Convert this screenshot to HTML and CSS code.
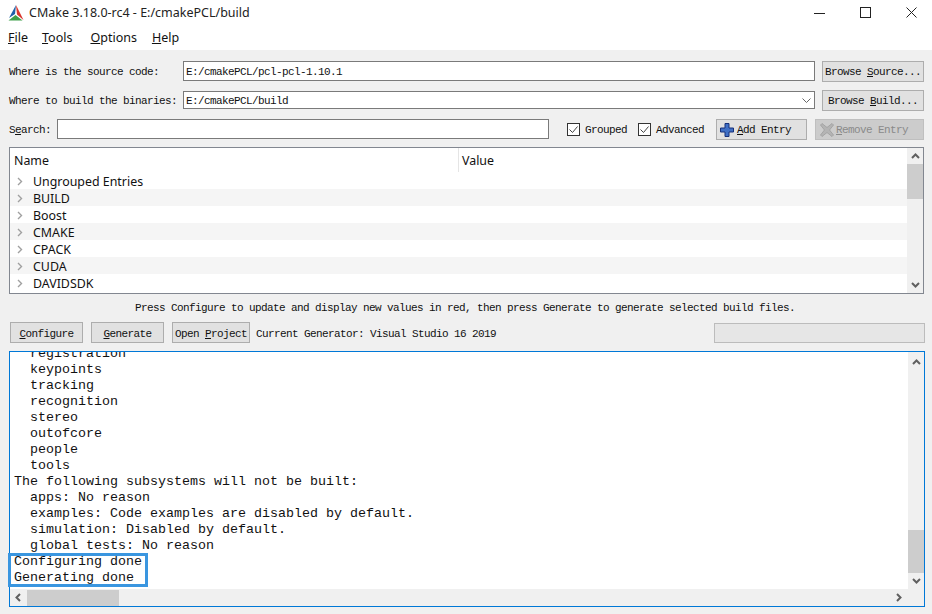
FILE: index.html
```html
<!DOCTYPE html>
<html lang="en">
<head>
<meta charset="utf-8">
<title>CMake</title>
<link rel="stylesheet" href="styles.css">
</head>
<body>
<div class="window">
  <header class="titlebar">
    <svg class="logo" viewBox="0 0 16 16"><polygon points="8,0 1,13 7,9" fill="#1f5fa8"/><polygon points="8,0 15.5,15 9,9.5" fill="#d9352c"/><polygon points="0.5,15.5 7.5,10 14.5,15.5" fill="#3f9f4a"/></svg>
    <span class="title">CMake 3.18.0-rc4 - E:/cmakePCL/build</span>
    <div class="winctl">
      <svg viewBox="0 0 11 11"><path d="M0 6.5H11" stroke="#222" fill="none"/></svg>
      <svg viewBox="0 0 11 11"><rect x="0.5" y="0.5" width="10" height="10" stroke="#222" fill="none"/></svg>
      <svg viewBox="0 0 11 11"><path d="M0.5 0.5L10.5 10.5M10.5 0.5L0.5 10.5" stroke="#222" fill="none"/></svg>
    </div>
  </header>
  <nav class="menubar">
    <span class="menu-file"><u>F</u>ile</span><span class="menu-tools"><u>T</u>ools</span><span class="menu-options"><u>O</u>ptions</span><span><u>H</u>elp</span>
  </nav>
  <main class="content">
    <div class="row row-source">
      <label class="mono label">Where is the source code:</label>
      <div class="field mono grow">E:/cmakePCL/pcl-pcl-1.10.1</div>
      <button class="btn mono btn-browse"><span>Browse <u>S</u>ource...</span></button>
    </div>
    <div class="row row-next">
      <label class="mono label">Where to build the binaries:</label>
      <div class="field combo mono grow">E:/cmakePCL/build
        <svg class="combo-arrow" viewBox="0 0 9 5"><path d="M0.5 0.5L4.5 4.5L8.5 0.5" fill="none" stroke="#666"/></svg>
      </div>
      <button class="btn mono btn-browse"><span>Browse <u>B</u>uild...</span></button>
    </div>
    <div class="row row-next">
      <label class="mono label-search">S<u>e</u>arch:</label>
      <div class="field search"></div>
      <label class="mono check check-first"><span class="box"><svg viewBox="0 0 11 11"><path d="M1.5 5.5L4.5 8.5L9.5 2.5" fill="none" stroke="#444"/></svg></span>Grouped</label>
      <label class="mono check check-second"><span class="box"><svg viewBox="0 0 11 11"><path d="M1.5 5.5L4.5 8.5L9.5 2.5" fill="none" stroke="#444"/></svg></span>Advanced</label>
      <button class="btn mono btn-add"><svg class="entry-icon" viewBox="0 0 14 14"><path d="M5 0.5H9V5H13.5V9H9V13.5H5V9H0.5V5H5Z" fill="#3f6fc4" stroke="#16307a"/></svg><span><u>A</u>dd Entry</span></button>
      <button class="btn mono btn-remove"><svg class="entry-icon" viewBox="0 0 14 14"><path d="M2 0.5L7 4.5L12 0.5L13.5 2L9.5 7L13.5 12L12 13.5L7 9.5L2 13.5L0.5 12L4.5 7L0.5 2Z" fill="#b4b4b4" stroke="#a4a4a4"/></svg><span><u>R</u>emove Entry</span></button>
    </div>
    <section class="tree">
      <div class="tree-main">
        <div class="tree-head"><div class="col-name">Name</div><div class="col-value">Value</div></div>
        <div class="tree-row"><svg class="exp" viewBox="0 0 6 9"><path d="M1 1L4.5 4.5L1 8" fill="none" stroke="#a0a0a0" stroke-width="1.4"/></svg>Ungrouped Entries</div>
        <div class="tree-row alt"><svg class="exp" viewBox="0 0 6 9"><path d="M1 1L4.5 4.5L1 8" fill="none" stroke="#a0a0a0" stroke-width="1.4"/></svg>BUILD</div>
        <div class="tree-row"><svg class="exp" viewBox="0 0 6 9"><path d="M1 1L4.5 4.5L1 8" fill="none" stroke="#a0a0a0" stroke-width="1.4"/></svg>Boost</div>
        <div class="tree-row alt"><svg class="exp" viewBox="0 0 6 9"><path d="M1 1L4.5 4.5L1 8" fill="none" stroke="#a0a0a0" stroke-width="1.4"/></svg>CMAKE</div>
        <div class="tree-row"><svg class="exp" viewBox="0 0 6 9"><path d="M1 1L4.5 4.5L1 8" fill="none" stroke="#a0a0a0" stroke-width="1.4"/></svg>CPACK</div>
        <div class="tree-row alt"><svg class="exp" viewBox="0 0 6 9"><path d="M1 1L4.5 4.5L1 8" fill="none" stroke="#a0a0a0" stroke-width="1.4"/></svg>CUDA</div>
        <div class="tree-row"><svg class="exp" viewBox="0 0 6 9"><path d="M1 1L4.5 4.5L1 8" fill="none" stroke="#a0a0a0" stroke-width="1.4"/></svg>DAVIDSDK</div>
      </div>
      <div class="vbar">
        <svg class="arrow" viewBox="0 0 9 6"><path d="M1 5L4.5 1.5L8 5" fill="none" stroke="#606060" stroke-width="2"/></svg>
        <div class="thumb thumb-tree"></div>
        <div class="spacer"></div>
        <svg class="arrow" viewBox="0 0 9 6"><path d="M1 1L4.5 4.5L8 1" fill="none" stroke="#606060" stroke-width="2"/></svg>
      </div>
    </section>
    <p class="info mono">Press Configure to update and display new values in red, then press Generate to generate selected build files.</p>
    <div class="row actions">
      <button class="btn mono btn-action"><span><u>C</u>onfigure</span></button>
      <button class="btn mono btn-action"><span><u>G</u>enerate</span></button>
      <button class="btn mono btn-open"><span>Open <u>P</u>roject</span></button>
      <span class="mono generator">Current Generator: Visual Studio 16 2019</span>
      <div class="progress"></div>
    </div>
    <section class="log">
      <div class="log-top">
        <div class="log-text">
<pre class="log-lines">  registration
  keypoints
  tracking
  recognition
  stereo
  outofcore
  people
  tools
The following subsystems will not be built:
  apps: No reason
  examples: Code examples are disabled by default.
  simulation: Disabled by default.
  global tests: No reason
Configuring done
Generating done</pre>
        </div>
        <div class="vbar vbar-log">
          <svg class="arrow" viewBox="0 0 9 6"><path d="M1 5L4.5 1.5L8 5" fill="none" stroke="#606060" stroke-width="2"/></svg>
          <div class="spacer"></div>
          <div class="thumb thumb-log"></div>
          <svg class="arrow" viewBox="0 0 9 6"><path d="M1 1L4.5 4.5L8 1" fill="none" stroke="#606060" stroke-width="2"/></svg>
        </div>
      </div>
      <div class="hbar">
        <svg class="harrow" viewBox="0 0 6 9"><path d="M5 1L1.5 4.5L5 8" fill="none" stroke="#606060" stroke-width="2"/></svg>
        <div class="hthumb"></div>
        <div class="spacer-h"></div>
        <svg class="harrow" viewBox="0 0 6 9"><path d="M1 1L4.5 4.5L1 8" fill="none" stroke="#606060" stroke-width="2"/></svg>
        <div class="corner"></div>
      </div>
      <div class="highlight"></div>
    </section>
  </main>
</div>
</body>
</html>
```
FILE: styles.css
```css
* { box-sizing: border-box; }
html, body { margin: 0; padding: 0; }
body { width: 932px; height: 614px; overflow: hidden; background: #fff; font-family: "Noto Sans", "Open Sans", sans-serif; font-size: 12.4px; color: #111; }
.window { display: flex; flex-direction: column; height: 614px; }
.titlebar { height: 25px; display: flex; align-items: center; padding-left: 8px; background: #fff; flex: none; }
.logo { width: 16px; height: 16px; margin-right: 5px; }
.title { font-size: 12.5px; color: #222; }
.winctl { margin-left: auto; display: flex; gap: 35px; padding-right: 15px; }
.winctl svg { width: 11px; height: 11px; display: block; }
.menubar { height: 25px; flex: none; display: flex; align-items: center; gap: 16px; padding-left: 8px; background: #fff; font-size: 12.5px; }
.menu-file { margin-right: -2px; }
.menu-tools { margin-right: 2px; }
.menu-options { margin-right: -1px; }
.content { flex: 1; background: #f0f0f0; padding: 11px 8px 0 9px; display: flex; flex-direction: column; }
.mono { font-family: "Liberation Mono", monospace; font-size: 11px; letter-spacing: -0.6px; color: #111; }
.row { display: flex; align-items: center; height: 21px; flex: none; }
.row-next { margin-top: 8px; }
.label { width: 174px; flex: none; }
.label-search { width: 48px; flex: none; }
.field { height: 20px; background: #fff; border: 1px solid #7a7a7a; padding: 0 2px; line-height: 20px; position: relative; white-space: nowrap; align-self: flex-start; }
.grow { flex: 1; }
.combo { height: 18px; line-height: 18px; margin-top: 1px; }
.combo-arrow { position: absolute; right: 3px; top: 6px; width: 9px; height: 5px; }
.search { width: 492px; flex: none; }
.btn { height: 21px; background: #e1e1e1; border: 1px solid #adadad; padding: 0; display: flex; align-items: center; justify-content: center; white-space: nowrap; flex: none; }
.btn-browse { width: 102px; margin-left: 7px; }
.btn-browse span { padding-top: 1px; }
.check { display: flex; align-items: center; gap: 5px; flex: none; }
.check-first { margin-left: 18px; width: 60px; }
.check-second { margin-left: 11px; width: 67px; }
.box { width: 13px; height: 13px; border: 1px solid #333; background: #fff; display: block; flex: none; }
.box svg { display: block; width: 11px; height: 11px; }
.btn-add { width: 91px; margin-left: 11px; gap: 3px; justify-content: flex-start; padding-left: 3px; }
.btn-remove { width: 109px; margin-left: 8px; gap: 2px; justify-content: flex-start; padding-left: 4px; background: #cccccc; color: #8a8a8a; border-color: #bfbfbf; }
.entry-icon { width: 14px; height: 14px; flex: none; }
.tree { margin-top: 7px; height: 147px; flex: none; width: 915px; background: #fff; border: 1px solid #828790; display: flex; }
.tree-main { flex: 1; min-width: 0; display: flex; flex-direction: column; }
.tree-head { height: 24px; display: flex; flex: none; }
.col-name { width: 449px; padding-left: 4px; line-height: 25px; border-right: 1px solid #e5e5e5; }
.col-value { padding-left: 3px; line-height: 25px; }
.tree-row { height: 17px; padding: 2px 0 0 7px; display: flex; align-items: center; flex: none; }
.tree-row.alt { background: #f5f5f5; }
.exp { width: 6px; height: 9px; margin-right: 10px; }
.vbar { width: 16px; flex: none; background: #f0f0f0; display: flex; flex-direction: column; align-items: center; padding: 5px 0; }
.arrow { width: 9px; height: 6px; flex: none; }
.thumb { width: 100%; background: #cdcdcd; flex: none; }
.thumb-tree { height: 35px; margin-top: 5px; }
.spacer { flex: 1; }
.info { text-align: center; margin: 0; height: 28px; line-height: 29px; flex: none; padding-right: 3px; }
.actions { margin-left: 1px; }
.btn-action { width: 73px; margin-right: 8px; }
.btn-action span, .btn-open span { padding-top: 2px; }
.btn-open { width: 78px; }
.generator { margin-left: 6px; padding-top: 2px; }
.progress { margin-left: auto; width: 211px; height: 20px; background: #e6e6e6; border: 1px solid #bcbcbc; margin-right: -1px; }
.log { margin-top: 8px; width: 916px; height: 256px; flex: none; background: #fff; border: 1px solid #0078d7; display: flex; flex-direction: column; position: relative; }
.log-top { flex: 1; display: flex; min-height: 0; }
.log-text { flex: 1; overflow: hidden; }
.log-lines { margin: -6px 0 0 4px; font-family: "Liberation Mono", monospace; font-size: 13.33px; line-height: 16px; color: #111; }
.highlight { position: absolute; left: -2px; top: 201px; width: 140px; height: 34px; border: 3px solid #3a96e0; }
.vbar-log { padding: 7px 0 5px; }
.thumb-log { height: 43px; margin-bottom: 5px; }
.hbar { height: 17px; flex: none; background: #f0f0f0; display: flex; align-items: center; padding-left: 5px; }
.harrow { width: 6px; height: 9px; flex: none; }
.hthumb { width: 92px; height: 16px; background: #cdcdcd; margin-left: 6px; flex: none; }
.spacer-h { flex: 1; }
.corner { width: 16px; margin-left: 6px; flex: none; }
```
